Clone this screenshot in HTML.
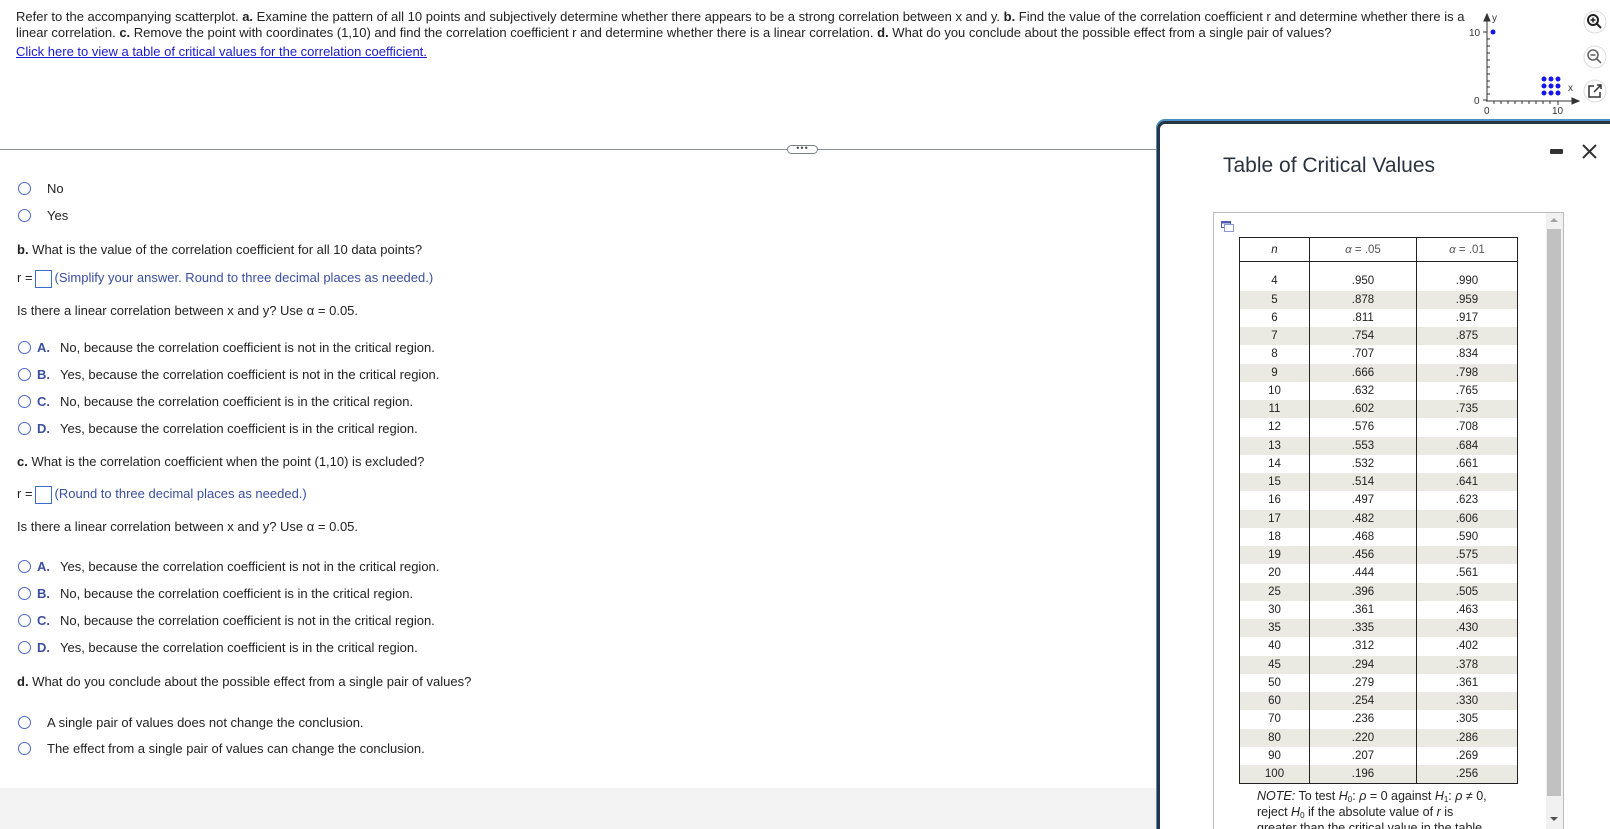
<!DOCTYPE html>
<html><head><meta charset="utf-8"><style>
*{margin:0;padding:0;box-sizing:border-box}
html,body{width:1610px;height:829px;overflow:hidden}
body{background:#fff;font-family:"Liberation Sans",Arial,sans-serif;font-size:13px;color:#222;position:relative}
#root{position:absolute;left:0;top:0;width:1610px;height:829px;overflow:hidden}
.a{position:absolute;white-space:nowrap;line-height:16px}
.r{position:absolute;width:13px;height:13px;border:1.5px solid #4a68c8;border-radius:50%}
.l{color:#3a4fa0}
.box{display:inline-block;width:17px;height:18px;border:1px solid #3a6fd0;vertical-align:middle;margin:0 3px 0 2px}
table{border-collapse:collapse;position:absolute;left:1239px;top:237px;width:279px;font-size:11.5px;color:#222}
td{text-align:center;height:18.26px;padding:0;border-left:1.5px solid #222;border-right:1.5px solid #222;line-height:18px}
tr.s td{background:#eaeae2}
th{height:24px;font-weight:normal;border:1.5px solid #222;font-size:11.5px}
sub{font-size:8px;line-height:0;vertical-align:-2px}
</style></head><body><div id="root">
<div class="a" style="left:16px;top:9px">Refer to the accompanying scatterplot. <b>a.</b> Examine the pattern of all 10 points and subjectively determine whether there appears to be a strong correlation between x and y. <b>b.</b> Find the value of the correlation coefficient r and determine whether there is a</div>
<div class="a" style="left:16px;top:25px">linear correlation. <b>c.</b> Remove the point with coordinates (1,10) and find the correlation coefficient r and determine whether there is a linear correlation. <b>d.</b> What do you conclude about the possible effect from a single pair of values?</div>
<div class="a" style="left:16px;top:44px;color:#1a1acc;text-decoration:underline">Click here to view a table of critical values for the correlation coefficient.</div>

<svg style="position:absolute;left:1460px;top:8px" width="135" height="110">
<g stroke="#333" stroke-width="1" fill="none">
<line x1="27" y1="10" x2="27" y2="93"/><line x1="26" y1="93" x2="115" y2="93"/>
<path d="M24 13 L27 6 L30 13Z" fill="#333"/><path d="M112 90 L119 93 L112 96Z" fill="#333"/>
</g>
<g stroke="#333">
<line x1="23" y1="24" x2="27" y2="24"/><line x1="23" y1="92" x2="27" y2="92"/>
<line x1="98" y1="93" x2="98" y2="97"/>
<line x1="34" y1="93" x2="34" y2="96"/><line x1="41" y1="93" x2="41" y2="96"/><line x1="48" y1="93" x2="48" y2="96"/><line x1="55" y1="93" x2="55" y2="96"/><line x1="62" y1="93" x2="62" y2="96"/><line x1="69" y1="93" x2="69" y2="96"/><line x1="76" y1="93" x2="76" y2="96"/><line x1="83" y1="93" x2="83" y2="96"/><line x1="90" y1="93" x2="90" y2="96"/>
<line x1="27" y1="31" x2="30" y2="31"/><line x1="27" y1="38" x2="30" y2="38"/><line x1="27" y1="45" x2="30" y2="45"/><line x1="27" y1="52" x2="30" y2="52"/><line x1="27" y1="59" x2="30" y2="59"/><line x1="27" y1="66" x2="30" y2="66"/><line x1="27" y1="73" x2="30" y2="73"/><line x1="27" y1="79" x2="30" y2="79"/><line x1="27" y1="86" x2="30" y2="86"/>
</g>
<g font-size="10" fill="#333" font-family="Liberation Sans">
<text x="9" y="28">10</text><text x="14" y="96">0</text><text x="24" y="106">0</text><text x="92" y="106">10</text>
<text x="32" y="13">y</text><text x="108" y="83">x</text></g>
<g fill="#1515ee"><circle cx="33" cy="24" r="2.5"/>
<circle cx="84" cy="71" r="2.5"/><circle cx="91" cy="71" r="2.5"/><circle cx="98" cy="71" r="2.5"/>
<circle cx="84" cy="78" r="2.5"/><circle cx="91" cy="78" r="2.5"/><circle cx="98" cy="78" r="2.5"/>
<circle cx="84" cy="85" r="2.5"/><circle cx="91" cy="85" r="2.5"/><circle cx="98" cy="85" r="2.5"/></g>
</svg>
<svg style="position:absolute;left:1582px;top:9px" width="28" height="100">
<g fill="#fff" stroke="#ddd"><circle cx="13" cy="13" r="11"/><circle cx="13" cy="48" r="11"/><circle cx="13" cy="82" r="11"/></g>
<g stroke="#222" stroke-width="2" fill="none"><circle cx="11" cy="11" r="5"/><line x1="15" y1="15" x2="19" y2="19"/><line x1="8.5" y1="11" x2="13.5" y2="11" stroke-width="1.5"/><line x1="11" y1="8.5" x2="11" y2="13.5" stroke-width="1.5"/></g>
<g stroke="#666" stroke-width="1.6" fill="none"><circle cx="11" cy="46" r="5"/><line x1="15" y1="50" x2="19" y2="54"/><line x1="8.5" y1="46" x2="13.5" y2="46"/></g>
<g stroke="#333" stroke-width="1.5" fill="none"><path d="M12 77 H7 V88 H18 V83"/><path d="M12 83 L19 76 M15 76 H19 V80"/></g>
</svg>

<div style="position:absolute;left:0;top:149px;width:1160px;height:1px;background:#8a9099"></div>
<div style="position:absolute;left:787px;top:145px;width:31px;height:9px;border:1px solid #7a818a;border-radius:5px;background:#fff;font-size:9px;line-height:5px;text-align:center;color:#555;letter-spacing:1px">•••</div>

<div class="r" style="left:18px;top:182px"></div><div class="a" style="left:47px;top:181px">No</div>
<div class="r" style="left:18px;top:209px"></div><div class="a" style="left:47px;top:208px">Yes</div>
<div class="a" style="left:17px;top:242px"><b>b.</b> What is the value of the correlation coefficient for all 10 data points?</div>
<div class="a" style="left:17px;top:268px;line-height:20px">r =<span class="box"></span><span class="l">(Simplify your answer. Round to three decimal places as needed.)</span></div>
<div class="a" style="left:17px;top:303px">Is there a linear correlation between x and y? Use α = 0.05.</div>
<div class="r" style="left:18px;top:341px"></div><div class="a l" style="left:37px;top:340px"><b>A.</b></div><div class="a" style="left:60px;top:340px">No, because the correlation coefficient is not in the critical region.</div>
<div class="r" style="left:18px;top:368px"></div><div class="a l" style="left:37px;top:367px"><b>B.</b></div><div class="a" style="left:60px;top:367px">Yes, because the correlation coefficient is not in the critical region.</div>
<div class="r" style="left:18px;top:395px"></div><div class="a l" style="left:37px;top:394px"><b>C.</b></div><div class="a" style="left:60px;top:394px">No, because the correlation coefficient is in the critical region.</div>
<div class="r" style="left:18px;top:422px"></div><div class="a l" style="left:37px;top:421px"><b>D.</b></div><div class="a" style="left:60px;top:421px">Yes, because the correlation coefficient is in the critical region.</div>
<div class="a" style="left:17px;top:454px"><b>c.</b> What is the correlation coefficient when the point (1,10) is excluded?</div>
<div class="a" style="left:17px;top:484px;line-height:20px">r =<span class="box"></span><span class="l">(Round to three decimal places as needed.)</span></div>
<div class="a" style="left:17px;top:519px">Is there a linear correlation between x and y? Use α = 0.05.</div>
<div class="r" style="left:18px;top:560px"></div><div class="a l" style="left:37px;top:559px"><b>A.</b></div><div class="a" style="left:60px;top:559px">Yes, because the correlation coefficient is not in the critical region.</div>
<div class="r" style="left:18px;top:587px"></div><div class="a l" style="left:37px;top:586px"><b>B.</b></div><div class="a" style="left:60px;top:586px">No, because the correlation coefficient is in the critical region.</div>
<div class="r" style="left:18px;top:614px"></div><div class="a l" style="left:37px;top:613px"><b>C.</b></div><div class="a" style="left:60px;top:613px">No, because the correlation coefficient is not in the critical region.</div>
<div class="r" style="left:18px;top:641px"></div><div class="a l" style="left:37px;top:640px"><b>D.</b></div><div class="a" style="left:60px;top:640px">Yes, because the correlation coefficient is in the critical region.</div>
<div class="a" style="left:17px;top:674px"><b>d.</b> What do you conclude about the possible effect from a single pair of values?</div>
<div class="r" style="left:18px;top:716px"></div><div class="a" style="left:47px;top:715px">A single pair of values does not change the conclusion.</div>
<div class="r" style="left:18px;top:742px"></div><div class="a" style="left:47px;top:741px">The effect from a single pair of values can change the conclusion.</div>
<div style="position:absolute;left:0;top:788px;width:1160px;height:41px;background:#f3f3f3"></div>

<div style="position:absolute;left:1157px;top:121px;width:453px;height:708px;border:3px solid #2a3340;border-right:none;border-bottom:none;border-radius:8px 0 0 0;background:#fff;box-shadow:0 -1px 0 1px #4a90c8"></div>
<div class="a" style="left:1223px;top:154px;font-size:21px;line-height:24px;color:#2a3340">Table of Critical Values</div>
<div style="position:absolute;left:1550px;top:149px;width:13px;height:5px;background:#333;border-radius:1px"></div>
<svg style="position:absolute;left:1582px;top:144px" width="15" height="15"><path d="M1 1L14 14M14 1L1 14" stroke="#333" stroke-width="2"/></svg>

<div style="position:absolute;left:1213px;top:212px;width:351px;height:617px;border:1px solid #bbb;border-bottom:none"></div>
<svg style="position:absolute;left:1221px;top:221px" width="13" height="11"><rect x="0.5" y="0.5" width="9" height="6" fill="none" stroke="#4a5ab0"/><rect x="3.5" y="3.5" width="9" height="7" fill="#fff" stroke="#8a9ad0"/><rect x="0.5" y="0.5" width="9" height="2" fill="#4a5ab0"/></svg>
<div style="position:absolute;left:1546px;top:213px;width:17px;height:616px;background:#f1f1f1"></div>
<div style="position:absolute;left:1547px;top:229px;width:14px;height:567px;background:#c1c1c1"></div>
<svg style="position:absolute;left:1549px;top:216px" width="10" height="8"><path d="M1 6L5 2L9 6Z" fill="#a3a3a3"/></svg>
<svg style="position:absolute;left:1549px;top:815px" width="10" height="8"><path d="M1 2L5 6L9 2Z" fill="#505050"/></svg>

<table>
<tr><th style="width:70px"><i>n</i></th><th style="width:107px;color:#555"><i>α</i> = .05</th><th style="color:#555"><i>α</i> = .01</th></tr>
<tr><td style="height:29px;padding-top:9px">4</td><td style="padding-top:9px">.950</td><td style="padding-top:9px">.990</td></tr>
<tr class="s"><td>5</td><td>.878</td><td>.959</td></tr>
<tr><td>6</td><td>.811</td><td>.917</td></tr>
<tr class="s"><td>7</td><td>.754</td><td>.875</td></tr>
<tr><td>8</td><td>.707</td><td>.834</td></tr>
<tr class="s"><td>9</td><td>.666</td><td>.798</td></tr>
<tr><td>10</td><td>.632</td><td>.765</td></tr>
<tr class="s"><td>11</td><td>.602</td><td>.735</td></tr>
<tr><td>12</td><td>.576</td><td>.708</td></tr>
<tr class="s"><td>13</td><td>.553</td><td>.684</td></tr>
<tr><td>14</td><td>.532</td><td>.661</td></tr>
<tr class="s"><td>15</td><td>.514</td><td>.641</td></tr>
<tr><td>16</td><td>.497</td><td>.623</td></tr>
<tr class="s"><td>17</td><td>.482</td><td>.606</td></tr>
<tr><td>18</td><td>.468</td><td>.590</td></tr>
<tr class="s"><td>19</td><td>.456</td><td>.575</td></tr>
<tr><td>20</td><td>.444</td><td>.561</td></tr>
<tr class="s"><td>25</td><td>.396</td><td>.505</td></tr>
<tr><td>30</td><td>.361</td><td>.463</td></tr>
<tr class="s"><td>35</td><td>.335</td><td>.430</td></tr>
<tr><td>40</td><td>.312</td><td>.402</td></tr>
<tr class="s"><td>45</td><td>.294</td><td>.378</td></tr>
<tr><td>50</td><td>.279</td><td>.361</td></tr>
<tr class="s"><td>60</td><td>.254</td><td>.330</td></tr>
<tr><td>70</td><td>.236</td><td>.305</td></tr>
<tr class="s"><td>80</td><td>.220</td><td>.286</td></tr>
<tr><td>90</td><td>.207</td><td>.269</td></tr>
<tr class="s"><td style="border-bottom:1.5px solid #222">100</td><td style="border-bottom:1.5px solid #222">.196</td><td style="border-bottom:1.5px solid #222">.256</td></tr>
</table>
<div class="a" style="left:1257px;top:788px;height:41px;overflow:hidden;font-size:12.5px;line-height:16px;color:#222"><i>NOTE:</i> To test <i>H</i><sub>0</sub>: <i>ρ</i> = 0 against <i>H</i><sub>1</sub>: <i>ρ</i> ≠ 0,<br>reject <i>H</i><sub>0</sub> if the absolute value of <i>r</i> is<br>greater than the critical value in the table.</div>
</div></body></html>
